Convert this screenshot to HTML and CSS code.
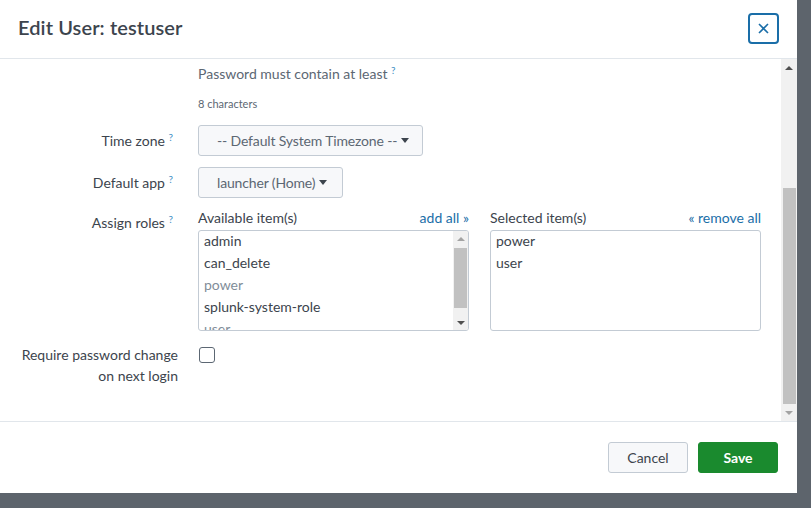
FILE: index.html
```html
<!DOCTYPE html>
<html lang="en">
<head>
    <meta charset="UTF-8">
    <title>Edit User: testuser</title>
    <link rel="stylesheet" href="styles.css">
</head>
<body>
    <div class="modal">
        <div class="modal-header">
            <h1>Edit User: testuser</h1>
            <button class="close" aria-label="Close">
                <svg width="11" height="11" viewBox="0 0 11 11"><path d="M1 1 L10 10 M10 1 L1 10" stroke="#1a6ea8" stroke-width="1.6" fill="none"/></svg>
            </button>
        </div>

        <div class="modal-body">
            <div class="form">
                <div class="help">
                    <p class="help-main">Password must contain at least <sup class="tip">?</sup></p>
                    <p class="help-small">8 characters</p>
                </div>

                <div class="row row-timezone">
                    <label>Time zone <sup class="tip">?</sup></label>
                    <div class="control">
                        <button class="select wide">-- Default System Timezone -- <span class="caret"></span></button>
                    </div>
                </div>

                <div class="row row-app">
                    <label>Default app <sup class="tip">?</sup></label>
                    <div class="control">
                        <button class="select">launcher (Home) <span class="caret"></span></button>
                    </div>
                </div>

                <div class="row row-roles">
                    <label class="label-roles">Assign roles <sup class="tip">?</sup></label>
                    <div class="control roles">
                        <div class="picker">
                            <div class="picker-head">
                                <span>Available item(s)</span>
                                <a href="#">add all &raquo;</a>
                            </div>
                            <div class="listbox">
                                <ul>
                                    <li>admin</li>
                                    <li>can_delete</li>
                                    <li class="taken">power</li>
                                    <li>splunk-system-role</li>
                                    <li class="taken">user</li>
                                </ul>
                                <div class="sbar small">
                                    <span class="arr up light"></span>
                                    <span class="sp-top"></span>
                                    <span class="thumb"></span>
                                    <span class="sp-bot"></span>
                                    <span class="arr down"></span>
                                </div>
                            </div>
                        </div>
                        <div class="picker">
                            <div class="picker-head">
                                <span>Selected item(s)</span>
                                <a href="#">&laquo; remove all</a>
                            </div>
                            <div class="listbox">
                                <ul>
                                    <li>power</li>
                                    <li>user</li>
                                </ul>
                            </div>
                        </div>
                    </div>
                </div>

                <div class="row row-check">
                    <label>Require password change<br>on next login</label>
                    <div class="control">
                        <span class="checkbox"></span>
                    </div>
                </div>
            </div>

            <div class="sbar main">
                <span class="arr up"></span>
                <span class="sp-top"></span>
                <span class="thumb"></span>
                <span class="sp-bot"></span>
                <span class="arr down light"></span>
            </div>
        </div>

        <div class="modal-footer">
            <button class="btn">Cancel</button>
            <button class="btn btn-primary">Save</button>
        </div>
    </div>
</body>
</html>
```

FILE: styles.css
```css
body {
    margin: 0;
    background: #5d646c;
    font-family: 'Lato', 'Open Sans', sans-serif;
    color: #3c444d;
    height: 508px;
    overflow: hidden;
}

.modal {
    width: 797px;
    height: 493px;
    background: #fff;
    display: flex;
    flex-direction: column;
}

/* header */
.modal-header {
    height: 58px;
    border-bottom: 1px solid #e1e6eb;
    display: flex;
    align-items: center;
    justify-content: space-between;
    padding: 0 18px;
    flex-shrink: 0;
}

.modal-header h1 {
    margin: 0 0 5px;
    font-size: 20px;
    font-weight: 600;
    color: #3c444d;
    letter-spacing: 0.1px;
}

.close {
    width: 31px;
    height: 31px;
    border: 2px solid #1a6ea8;
    border-radius: 4px;
    background: #fff;
    display: flex;
    align-items: center;
    justify-content: center;
    padding: 0;
    margin-top: -2px;
}

/* body */
.modal-body {
    flex: 1;
    display: flex;
    overflow: hidden;
}

.form {
    flex: 1;
    padding-top: 5px;
}

.help {
    margin-left: 198px;
}

.help p {
    margin: 0;
}

.help-main {
    font-size: 14px;
    line-height: 20px;
    color: #5c6773;
}

.help-small {
    font-size: 11px;
    line-height: 14px;
    margin-top: 13px !important;
    color: #5c6773;
}

.tip {
    color: #3f8fc5;
    font-size: 10px;
    vertical-align: 5px;
    line-height: 0;
}

.row {
    display: grid;
    grid-template-columns: 178px 1fr;
    column-gap: 20px;
}

.row label {
    text-align: right;
    font-size: 14px;
    color: #3c444d;
}

.row-timezone {
    margin-top: 14px;
}

.row-timezone label,
.row-app label {
    line-height: 31px;
    padding-right: 5px;
}

.row-app {
    margin-top: 11px;
}

.select {
    height: 31px;
    background: #f7f8fa;
    border: 1px solid #c3cbd4;
    border-radius: 3px;
    font-family: inherit;
    font-size: 14px;
    letter-spacing: -0.15px;
    color: #5c6773;
    padding: 0 12px 0 18px;
    display: inline-flex;
    align-items: center;
    gap: 4px;
    white-space: nowrap;
}

.select.wide {
    width: 225px;
}

.select:not(.wide) {
    width: 145px;
}

.caret {
    width: 0;
    height: 0;
    border-left: 4px solid transparent;
    border-right: 4px solid transparent;
    border-top: 5px solid #3c444d;
}

/* roles */
.row-roles {
    margin-top: 11px;
}

.label-roles {
    padding-top: 5px;
    line-height: 18px;
    padding-right: 5px;
}

.roles {
    display: flex;
    gap: 21px;
}

.picker {
    width: 271px;
}

.picker-head {
    display: flex;
    justify-content: space-between;
    font-size: 14px;
    line-height: 18px;
    margin-bottom: 3px;
}

.picker-head a {
    color: #1a6ea8;
    text-decoration: none;
}

.listbox {
    height: 99px;
    border: 1px solid #c3cbd4;
    border-radius: 3px;
    display: flex;
    overflow: hidden;
}

.listbox ul {
    flex: 1;
    list-style: none;
    margin: -1px 0 0;
    padding: 0 0 0 5px;
    font-size: 14px;
    line-height: 22px;
    color: #3c444d;
}

.listbox li.taken {
    color: #818d99;
}

/* scrollbars */
.sbar {
    width: 16px;
    background: #f1f1f1;
    display: flex;
    flex-direction: column;
    align-items: center;
    flex-shrink: 0;
}

.sbar .arr {
    height: 17px;
    width: 16px;
    display: flex;
    align-items: center;
    justify-content: center;
    flex-shrink: 0;
}

.sbar .arr::after {
    content: "";
    border-left: 4px solid transparent;
    border-right: 4px solid transparent;
}

.arr.up::after {
    border-bottom: 4px solid #505050;
}

.arr.down::after {
    border-top: 4px solid #505050;
}

.arr.up.light::after {
    border-bottom-color: #a3a3a3;
}

.arr.down.light::after {
    border-top-color: #a3a3a3;
}

.thumb {
    width: 13px;
    background: #c1c1c1;
    flex-shrink: 0;
}

.sbar.main .sp-top { height: 112px; }
.sbar.main .thumb { height: 216px; }
.sbar.main .sp-bot { flex: 1; }

.sbar.small {
    width: 15px;
}

.sbar.small .arr {
    height: 15px;
}

.sbar.small .sp-top { height: 2px; }
.sbar.small .thumb { height: 60px; }
.sbar.small .sp-bot { flex: 1; }

/* checkbox row */
.row-check {
    margin-top: 13px;
}

.row-check label {
    line-height: 21px;
    padding-right: 0;
}

.checkbox {
    display: block;
    width: 14px;
    height: 14px;
    border: 1px solid #5c6773;
    border-radius: 3px;
    margin-top: 3px;
    margin-left: 1px;
}

/* footer */
.modal-footer {
    height: 71px;
    border-top: 1px solid #e1e6eb;
    display: flex;
    align-items: center;
    justify-content: flex-end;
    gap: 10px;
    padding-right: 19px;
    flex-shrink: 0;
}

.btn {
    width: 80px;
    height: 31px;
    border: 1px solid #c3cbd4;
    border-radius: 3px;
    background: #f7f8fa;
    color: #3c444d;
    font-family: inherit;
    font-size: 14px;
}

.btn-primary {
    background: #1a8a2e;
    border-color: #1a8a2e;
    color: #fff;
    font-weight: 700;
}
```
